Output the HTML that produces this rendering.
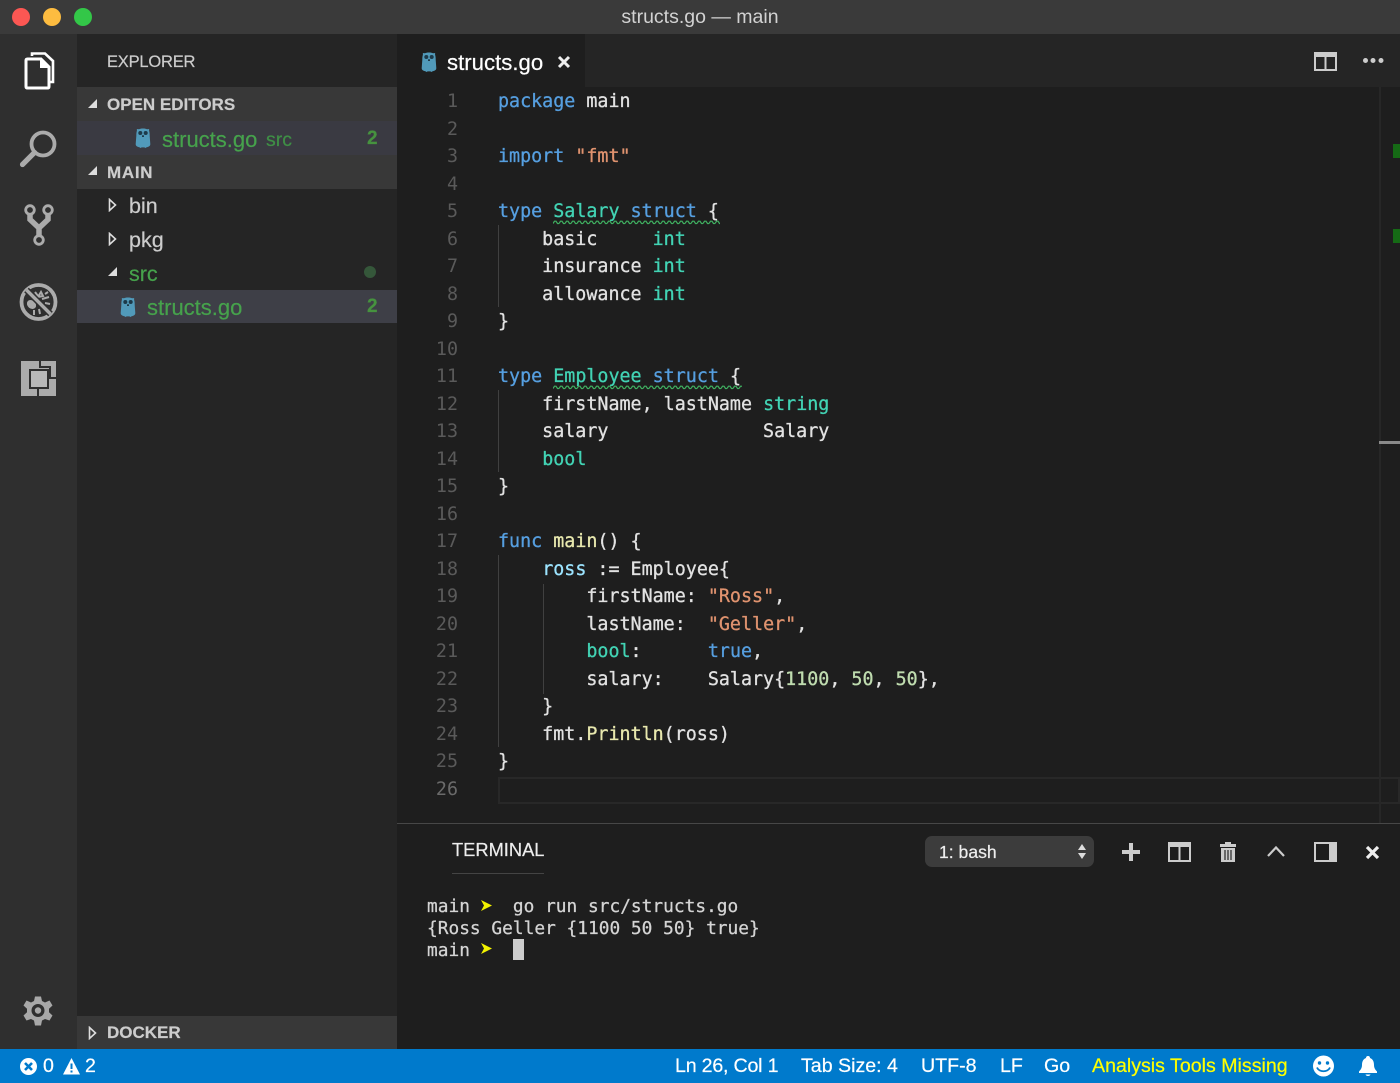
<!DOCTYPE html>
<html><head><meta charset="utf-8"><title>structs.go — main</title>
<style>
html,body{margin:0;padding:0;background:#1e1e1e}
#a{position:relative;width:1400px;height:1083px;overflow:hidden;background:#1e1e1e;font-family:"Liberation Sans",sans-serif;color:#ccc}
#a div,#a svg{position:absolute}
.t{white-space:pre;line-height:34px;height:34px;-webkit-text-stroke:.2px}
.ln{left:397px;width:61px;text-align:right;font:18.35px/27.5px "DejaVu Sans Mono",monospace;color:#5a5a5a;height:27.5px;margin-top:1px}
.c{left:498px;white-space:pre;font:18.35px/27.5px "DejaVu Sans Mono",monospace;color:#e2e2e2;height:27.5px;margin-top:1px;-webkit-text-stroke:.3px}
.tm{left:427px;white-space:pre;font:17.84px/21.5px "DejaVu Sans Mono",monospace;color:#d4d4d4;margin-top:.5px;-webkit-text-stroke:.25px}
.k{color:#569fe0}.y{color:#42d3b4}.s{color:#e0936f}.n{color:#bfdcaf}.f{color:#e8e8ae}.v{color:#9ce4ff}
.g{left:0;width:1px;background:#404040}
.sec{left:77px;width:320px;height:34px;background:#383838}
.h{font-weight:bold;font-size:17px;color:#ccc}
.st{font-size:19.6px;color:#fff;top:1049px;line-height:34px;white-space:pre;-webkit-text-stroke:.2px}
</style></head><body>
<div id="a">
<svg width="0" height="0"><defs>
<symbol id="go" viewBox="0 0 16 20"><path d="M2 2.500C1 1.500 3 .5 3.800 1.400 5.500.2 10.500.2 12.200 1.400 13 .5 15 1.500 14 2.500 14.600 4 14.700 6 14.700 8L15.300 16C15.400 18 13.500 19 11.500 19.200 11 20 10 20 9.500 19.400H6.500C6 20 5 20 4.500 19.200 2.500 19 .6 18 .7 16L1.300 8C1.300 6 1.400 4 2 2.500Z" fill="#519aba"/><circle cx="5.300" cy="5" r="2" fill="#1d3a4a"/><circle cx="10.700" cy="5" r="2" fill="#1d3a4a"/><rect x="7" y="7.300" width="2" height="1.700" fill="#1d3a4a"/></symbol>
<pattern id="sq" width="6" height="5" patternUnits="userSpaceOnUse"><path d="M0 3.500L1.500 1.200 3 1.200 4.500 3.500 6 3.500" fill="none" stroke="#3fb060" stroke-width="1.200"/></pattern>
</defs></svg>

<!-- title bar -->
<div style="left:0;top:0;width:1400px;height:34px;background:#3a3a3a"></div>
<div style="left:12px;top:8px;width:18px;height:18px;border-radius:50%;background:#fc5753"></div>
<div style="left:43px;top:8px;width:18px;height:18px;border-radius:50%;background:#fdbc40"></div>
<div style="left:74px;top:8px;width:18px;height:18px;border-radius:50%;background:#33c748"></div>
<div style="left:0;top:0;width:1400px;text-align:center;font-size:19.5px;line-height:34px;color:#d2d2d2">structs.go — main</div>

<!-- activity bar -->
<div style="left:0;top:34px;width:77px;height:1015px;background:#2f2f2f"></div>
<svg style="left:20px;top:50px" width="40" height="42" viewBox="0 0 40 42" fill="none">
<path d="M12 6V3.500H25L33 11V32H30" stroke="#fff" stroke-width="2.600"/>
<path d="M7.500 9H21L29 17V36.500C29 37.500 28.500 38 27.500 38H7.500C6.500 38 6 37.500 6 36.500V10.500C6 9.500 6.500 9 7.500 9Z" stroke="#fff" stroke-width="3"/>
<path d="M20 9V18H29Z" fill="#fff"/></svg>
<svg style="left:18px;top:128px" width="42" height="42" viewBox="0 0 42 42" fill="none" stroke="#ababab">
<circle cx="25" cy="16" r="11.500" stroke-width="3.800"/><path d="M16.500 24.500L4.500 36.500" stroke-width="5.200" stroke-linecap="round"/></svg>
<svg style="left:22px;top:203px" width="34" height="44" viewBox="0 0 34 44" fill="none" stroke="#ababab">
<circle cx="8" cy="7" r="4.300" stroke-width="2.800"/><circle cx="26" cy="7" r="4.300" stroke-width="2.800"/><circle cx="17" cy="37" r="4.300" stroke-width="2.800"/>
<path d="M8 11.500V16.500L17 25L26 16.500V11.500M17 25V32.500" stroke-width="5.500"/></svg>
<svg style="left:18px;top:282px" width="40" height="40" viewBox="0 0 40 40" fill="none" stroke="#ababab">
<circle cx="20.500" cy="20" r="17" stroke-width="3.800"/>
<ellipse cx="13.500" cy="22.500" rx="5" ry="4" fill="#ababab" stroke="none" transform="rotate(40 13.500 22.500)"/>
<path d="M23 10L25 14 20 15ZM17 10L20 14M27 12L30 10M24 17L31 15M27 21L32 22M24 25L28 29M16 28V33M21 27L22 32" stroke-width="2"/>
<path d="M8.500 8L32.500 32" stroke="#2f2f2f" stroke-width="6.500"/>
<path d="M8.500 8L32.500 32" stroke-width="3.400"/></svg>
<svg style="left:21px;top:361px" width="35" height="35" viewBox="0 0 35 35">
<rect width="35" height="35" fill="#ababab"/>
<path d="M19 0V7M35 17H28M17 28V35" stroke="#2f2f2f" stroke-width="2"/>
<path d="M19 6H29V16" fill="none" stroke="#2f2f2f" stroke-width="2"/>
<rect x="9" y="9" width="18" height="18" fill="#b8b8b8" stroke="#2f2f2f" stroke-width="2"/></svg>
<svg style="left:23px;top:995px" width="30" height="32" viewBox="0 0 30 32">
<path d="M12 1H18L19 5.500 22 7 26.500 5 29.500 10 26 13.300V16.700L29.500 20 26.500 25 22 23.500 19 25 18 30H12L11 25 8 23.500 3.500 25 .5 20 4 16.700V13.300L.5 10 3.500 5 8 7 11 5.500Z" fill="#a8a8a8" transform="translate(0 .5)"/>
<circle cx="15" cy="15.500" r="6.500" fill="#2f2f2f"/><circle cx="15" cy="15.500" r="3.200" fill="#a8a8a8"/></svg>

<!-- sidebar -->
<div style="left:77px;top:34px;width:320px;height:1015px;background:#252525"></div>
<div class="t" style="left:107px;top:45px;font-size:16.500px;letter-spacing:-.2px;color:#ccc">EXPLORER</div>
<div class="sec" style="top:87px"></div>
<svg style="left:87px;top:98px" width="12" height="12"><path d="M10 1V10H1Z" fill="#ddd"/></svg>
<div class="t h" style="left:107px;top:88px">OPEN EDITORS</div>
<div style="left:77px;top:121px;width:320px;height:34px;background:#3a3a42"></div>
<svg style="left:135px;top:128px" width="16" height="20"><use href="#go"/></svg>
<div class="t" style="left:162px;top:123px;font-size:22px;color:#46a24c">structs.go</div>
<div class="t" style="left:266px;top:123px;font-size:19.500px;color:#3f8f46">src</div>
<div class="t" style="left:367px;top:122px;font-size:19px;font-weight:bold;color:#46923f">2</div>
<div class="sec" style="top:155px"></div>
<svg style="left:87px;top:165px" width="12" height="12"><path d="M10 1V10H1Z" fill="#ddd"/></svg>
<div class="t h" style="left:107px;top:156px;letter-spacing:.7px">MAIN</div>

<svg style="left:108px;top:198px" width="10" height="14"><path d="M1.500 1.500L7.500 7L1.500 12.500Z" fill="#252525" stroke="#ddd" stroke-width="1.600"/></svg>
<div class="t" style="left:129px;top:189px;font-size:21.500px;color:#ccc">bin</div>
<svg style="left:108px;top:232px" width="10" height="14"><path d="M1.500 1.500L7.500 7L1.500 12.500Z" fill="#252525" stroke="#ddd" stroke-width="1.600"/></svg>
<div class="t" style="left:129px;top:223px;font-size:21.500px;color:#ccc">pkg</div>
<svg style="left:107px;top:266px" width="12" height="12"><path d="M10 1V10H1Z" fill="#ddd"/></svg>
<div class="t" style="left:129px;top:257px;font-size:21.500px;color:#46a24c">src</div>
<div style="left:364px;top:266px;width:12px;height:12px;border-radius:50%;background:#35573a"></div>
<div style="left:77px;top:290px;width:320px;height:33px;background:#3e3f47"></div>
<svg style="left:120px;top:297px" width="16" height="20"><use href="#go"/></svg>
<div class="t" style="left:147px;top:291px;font-size:22px;color:#46a24c">structs.go</div>
<div class="t" style="left:367px;top:290px;font-size:19px;font-weight:bold;color:#46923f">2</div>

<div class="sec" style="top:1016px;height:33px"></div>
<svg style="left:88px;top:1026px" width="10" height="14"><path d="M1.500 1.500L7.500 7L1.500 12.500Z" fill="#383838" stroke="#ddd" stroke-width="1.600"/></svg>
<div class="t h" style="left:107px;top:1016px">DOCKER</div>

<!-- tabs -->
<div style="left:397px;top:34px;width:1003px;height:53px;background:#252525"></div>
<div style="left:397px;top:34px;width:188px;height:53px;background:#1e1e1e"></div>
<svg style="left:421px;top:52px" width="16" height="20"><use href="#go"/></svg>
<div class="t" style="left:447px;top:46px;font-size:22.200px;color:#fff">structs.go</div>
<svg style="left:557px;top:55px" width="14" height="14"><path d="M2 2L12 12M12 2L2 12" stroke="#eee" stroke-width="3"/></svg>
<svg style="left:1314px;top:52px" width="23" height="19" fill="none" stroke="#ccc"><rect x="1" y="1" width="21" height="17" stroke-width="2"/><path d="M1 3.500H22" stroke-width="3"/><path d="M11.500 3V18" stroke-width="2"/></svg>
<svg style="left:1362px;top:56px" width="23" height="10"><circle cx="3.500" cy="4.500" r="2.500" fill="#ccc"/><circle cx="11" cy="4.500" r="2.500" fill="#ccc"/><circle cx="19" cy="4.500" r="2.500" fill="#ccc"/></svg>

<!-- editor -->
<div class="ln" style="top:87px">1</div><div class="c" style="top:87px"><span class="k">package</span> main</div>
<div class="ln" style="top:114.500px">2</div>
<div class="ln" style="top:142px">3</div><div class="c" style="top:142px"><span class="k">import</span> <span class="s">"fmt"</span></div>
<div class="ln" style="top:169.500px">4</div>
<div class="ln" style="top:197px">5</div><div class="c" style="top:197px"><span class="k">type</span> <span class="y">Salary</span> <span class="k">struct</span> {</div>
<div class="ln" style="top:224.500px">6</div><div class="c" style="top:224.500px">    basic     <span class="y">int</span></div>
<div class="ln" style="top:252px">7</div><div class="c" style="top:252px">    insurance <span class="y">int</span></div>
<div class="ln" style="top:279.500px">8</div><div class="c" style="top:279.500px">    allowance <span class="y">int</span></div>
<div class="ln" style="top:307px">9</div><div class="c" style="top:307px">}</div>
<div class="ln" style="top:334.500px">10</div>
<div class="ln" style="top:362px">11</div><div class="c" style="top:362px"><span class="k">type</span> <span class="y">Employee</span> <span class="k">struct</span> {</div>
<div class="ln" style="top:389.500px">12</div><div class="c" style="top:389.500px">    firstName, lastName <span class="y">string</span></div>
<div class="ln" style="top:417px">13</div><div class="c" style="top:417px">    salary              Salary</div>
<div class="ln" style="top:444.500px">14</div><div class="c" style="top:444.500px">    <span class="y">bool</span></div>
<div class="ln" style="top:472px">15</div><div class="c" style="top:472px">}</div>
<div class="ln" style="top:499.500px">16</div>
<div class="ln" style="top:527px">17</div><div class="c" style="top:527px"><span class="k">func</span> <span class="f">main</span>() {</div>
<div class="ln" style="top:554.500px">18</div><div class="c" style="top:554.500px">    <span class="v">ross</span> := Employee{</div>
<div class="ln" style="top:582px">19</div><div class="c" style="top:582px">        firstName: <span class="s">"Ross"</span>,</div>
<div class="ln" style="top:609.500px">20</div><div class="c" style="top:609.500px">        lastName:  <span class="s">"Geller"</span>,</div>
<div class="ln" style="top:637px">21</div><div class="c" style="top:637px">        <span class="y">bool</span>:      <span class="k">true</span>,</div>
<div class="ln" style="top:664.500px">22</div><div class="c" style="top:664.500px">        salary:    Salary{<span class="n">1100</span>, <span class="n">50</span>, <span class="n">50</span>},</div>
<div class="ln" style="top:692px">23</div><div class="c" style="top:692px">    }</div>
<div class="ln" style="top:719.500px">24</div><div class="c" style="top:719.500px">    fmt.<span class="f">Println</span>(ross)</div>
<div class="ln" style="top:747px">25</div><div class="c" style="top:747px">}</div>
<div class="ln" style="top:774.500px;color:#6a6a6a">26</div>

<!-- indent guides -->
<div class="g" style="left:498px;top:225px;height:82px"></div>
<div class="g" style="left:498px;top:390px;height:82px"></div>
<div class="g" style="left:498px;top:555px;height:192px"></div>
<div class="g" style="left:543px;top:584px;height:110px"></div>

<!-- squiggles -->
<svg style="left:553px;top:220px" width="167" height="6"><rect width="167" height="5" fill="url(#sq)"/></svg>
<svg style="left:553px;top:385px" width="189" height="6"><rect width="189" height="5" fill="url(#sq)"/></svg>

<!-- current line -->
<div style="left:498px;top:777px;width:902px;height:27px;box-sizing:border-box;border:2.500px solid #282828;border-right-width:2px"></div>

<!-- scrollbar / overview ruler -->
<div style="left:1379px;top:87px;width:2px;height:736px;background:#272727"></div>
<div style="left:1393px;top:144px;width:7px;height:14px;background:#156a15"></div>
<div style="left:1393px;top:229px;width:7px;height:14px;background:#156a15"></div>
<div style="left:1379px;top:441px;width:21px;height:3px;background:#8a8a8a"></div>

<!-- panel -->
<div style="left:397px;top:823px;width:1003px;height:226px;background:#1e1e1e;border-top:1px solid #474747;box-sizing:border-box"></div>
<div class="t" style="left:452px;top:833px;font-size:18.300px;color:#eee">TERMINAL</div>
<div style="left:452px;top:873px;width:92px;height:1px;background:#444"></div>
<div style="left:925px;top:836px;width:169px;height:31px;border-radius:7px;background:#3c3c3c"></div>
<div class="t" style="left:939px;top:835px;font-size:17.600px;color:#eee">1: bash</div>
<svg style="left:1077px;top:843px" width="10" height="18"><path d="M5 1L9 7H1ZM5 16L1 10H9Z" fill="#ddd"/></svg>
<svg style="left:1122px;top:843px" width="18" height="18"><path d="M7 0H11V7H18V11H11V18H7V11H0V7H7Z" fill="#ccc"/></svg>
<svg style="left:1168px;top:842px" width="23" height="20" fill="none" stroke="#ccc"><rect x="1" y="1" width="21" height="18" stroke-width="2"/><path d="M1 3.500H22" stroke-width="3"/><path d="M11.500 3V19" stroke-width="2"/></svg>
<svg style="left:1219px;top:841px" width="18" height="22"><path d="M6 1H12V3H17V6H1V3H6Z" fill="#ccc"/><path d="M2 7H16V21H2Z" fill="#ccc"/><path d="M6 9V19M9 9V19M12 9V19" stroke="#333" stroke-width="1.300"/></svg>
<svg style="left:1266px;top:844px" width="20" height="14"><path d="M2 12L10 3.500L18 12" fill="none" stroke="#ccc" stroke-width="2.200"/></svg>
<svg style="left:1314px;top:842px" width="23" height="20"><rect x="1" y="1" width="21" height="18" fill="none" stroke="#ccc" stroke-width="2"/><rect x="15" y="1" width="7" height="18" fill="#ccc"/></svg>
<svg style="left:1365px;top:845px" width="15" height="15"><path d="M2 2L13 13M13 2L2 13" stroke="#eee" stroke-width="3.200"/></svg>

<div class="tm" style="top:895px">main    go run src/structs.go</div>
<svg style="left:481px;top:900px" width="12" height="12"><path d="M0 0L11 5.500L0 11L3 5.500Z" fill="#f2f200"/></svg>
<div class="tm" style="top:917.500px">{Ross Geller {1100 50 50} true}</div>
<div class="tm" style="top:939px">main</div>
<svg style="left:481px;top:943px" width="12" height="12"><path d="M0 0L11 5.500L0 11L3 5.500Z" fill="#f2f200"/></svg>
<div style="left:513px;top:939px;width:11px;height:21px;background:#ccc"></div>

<!-- status bar -->
<div style="left:0;top:1049px;width:1400px;height:34px;background:#007acc"></div>
<svg style="left:20px;top:1058px" width="17" height="17"><circle cx="8.500" cy="8.500" r="8.500" fill="#fff"/><path d="M5 5L12 12M12 5L5 12" stroke="#007acc" stroke-width="2.600"/></svg>
<div class="st" style="left:43px">0</div>
<svg style="left:63px;top:1058px" width="17" height="17"><path d="M8.500 0L17 16.500H0Z" fill="#fff"/><path d="M8.500 5.500V11M8.500 12.500V14.500" stroke="#007acc" stroke-width="2"/></svg>
<div class="st" style="left:85px">2</div>
<div class="st" style="left:675px;letter-spacing:-.2px">Ln 26, Col 1</div>
<div class="st" style="left:801px">Tab Size: 4</div>
<div class="st" style="left:921px">UTF-8</div>
<div class="st" style="left:1000px">LF</div>
<div class="st" style="left:1044px">Go</div>
<div class="st" style="left:1092px;color:#ff0">Analysis Tools Missing</div>
<svg style="left:1312px;top:1055px" width="23" height="22"><circle cx="11.500" cy="11" r="10.500" fill="#fff"/><circle cx="7.500" cy="8" r="1.700" fill="#007acc"/><circle cx="15.500" cy="8" r="1.700" fill="#007acc"/><path d="M5 12.500C7 17.500 16 17.500 18 12.500" fill="none" stroke="#007acc" stroke-width="1.800"/></svg>
<svg style="left:1358px;top:1056px" width="20" height="21"><path d="M10 0C11.500 0 12 1 12 2 15 3 16 6 16 9 16 12 17.500 14 19 15.500V17H1V15.500C2.500 14 4 12 4 9 4 6 5 3 8 2 8 1 8.500 0 10 0Z" fill="#fff"/><path d="M7.500 18.500H12.500C12 20.500 8 20.500 7.500 18.500Z" fill="#fff"/></svg>
</div>
</body></html>
